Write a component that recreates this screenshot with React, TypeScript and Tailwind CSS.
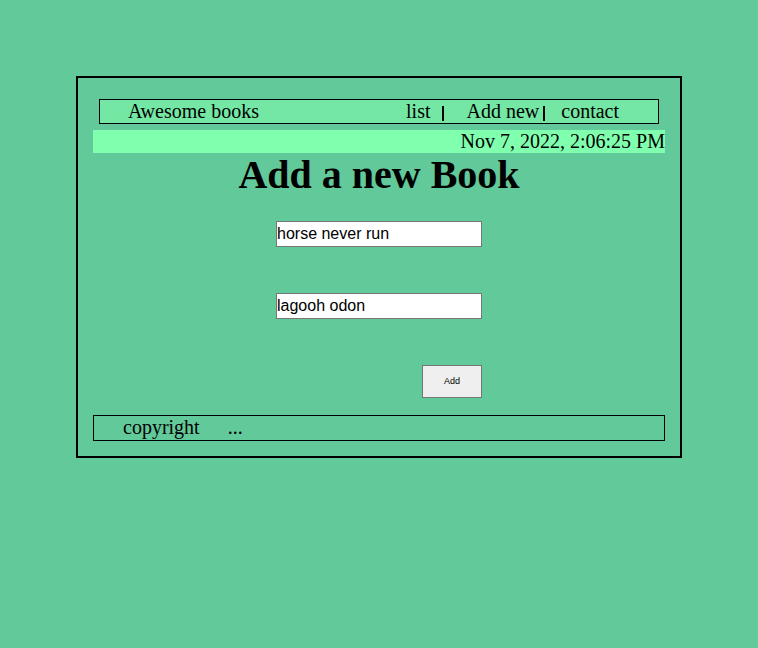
export default function App() {
  return (
    <div className="min-h-[648px] w-full bg-[#62c99a] pt-[76px] pl-[76px] font-['Liberation_Serif',serif] text-black">
      <div className="flex h-[382px] w-[606px] flex-col border-2 border-black px-[15px] pt-[21px]">
        <header className="mx-[6px] flex h-[25px] items-center border border-black bg-[#74e7a4] pb-[2px] pl-[28px] pr-[39px] text-[20px] leading-none">
          <span>Awesome books</span>
          <nav className="ml-auto flex items-center">
            <span>list</span>
            <span className="ml-[12px] mr-[22px] mt-[5px] h-[15px] w-[2px] bg-black" />
            <span>Add new</span>
            <span className="ml-[4px] mr-[16px] mt-[5px] h-[15px] w-[2px] bg-black" />
            <span>contact</span>
          </nav>
        </header>

        <div className="mt-[6px] flex h-[23px] items-center justify-end bg-[#80ffaf] pb-[2px] text-[20px] leading-none">
          Nov 7, 2022, 2:06:25 PM
        </div>

        <h1 className="text-center text-[40px] font-bold leading-[44px]">Add a new Book</h1>

        <form className="mx-auto mt-[24px] flex w-[206px] flex-col items-end font-['Liberation_Sans',Arial,sans-serif]">
          <input
            className="h-[26px] w-[206px] border border-[#767676] bg-white px-0 text-[16px] text-black outline-none"
            defaultValue="horse never run"
          />
          <input
            className="mt-[46px] h-[26px] w-[206px] border border-[#767676] bg-white px-0 text-[16px] text-black outline-none"
            defaultValue="lagooh odon"
          />
          <button
            type="button"
            className="mt-[46px] h-[33px] w-[60px] border border-[#767676] bg-[#efefef] text-[9px] text-black"
          >
            Add
          </button>
        </form>

        <footer className="mt-[17px] flex h-[26px] items-center border border-black pb-[2px] pl-[29px] text-[20px] leading-none">
          <span>copyright</span>
          <span className="ml-[28px]">...</span>
        </footer>
      </div>
    </div>
  )
}
